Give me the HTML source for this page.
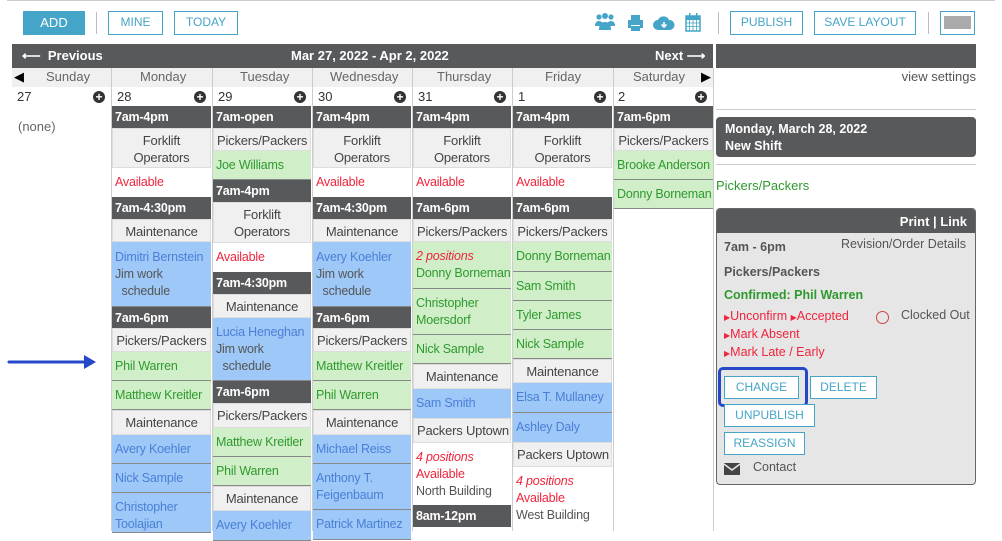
<!DOCTYPE html>
<html><head><meta charset="utf-8">
<style>
*{margin:0;padding:0;box-sizing:border-box}
body{width:1002px;height:531px;overflow:hidden;background:#fff;font-family:"Liberation Sans",sans-serif;font-size:12.5px;color:#555;position:relative}
.a{position:absolute}
.btn{position:absolute;border:1.5px solid #45a5c8;color:#45a5c8;font-size:12px;text-align:center;background:#fff}
.col{position:absolute;top:106px}
.c>div{position:absolute;left:0;right:0;padding:0 3px;overflow:hidden;white-space:nowrap;line-height:17px;letter-spacing:-0.2px}
.d{background:#58595b;color:#fff;font-weight:bold;padding-top:3px!important}
.g{background:#f0f0f0;text-align:center;padding-top:3px!important;border:1px solid #ddd;color:#444;font-size:13px}
.gr{background:#d0eec8;color:#2e9a2e;border-bottom:1px solid #888;padding-top:6px!important}
.bl{background:#9ec8f8;color:#4a7fd6;border-bottom:1px solid #888;padding-top:6px!important}
.w{background:#fff;color:#f0243c;padding-top:6px!important}
.i{font-style:italic;color:#f0243c}
.k{color:#555}
.sep{position:absolute;top:68px;width:1px;height:463px;background:#ccc}
.plus{position:absolute;top:91px;width:12px;height:12px;border-radius:50%;background:#333;color:#fff;font-size:12px;line-height:12px;text-align:center;font-weight:bold}
</style></head><body>
<div class="a" style="left:7px;top:0;width:988px;height:1px;background:#ccc"></div>
<div class="a" style="left:23px;top:11px;width:62px;height:24px;background:#45a5c8;color:#fff;font-size:13px;text-align:center;line-height:24px">ADD</div>
<div class="a" style="left:96px;top:12px;width:1px;height:22px;background:#bbb"></div>
<div class="btn" style="left:108px;top:11px;width:55px;height:24px;line-height:21px">MINE</div>
<div class="btn" style="left:174px;top:11px;width:64px;height:24px;line-height:21px">TODAY</div>
<svg class="a" style="left:594px;top:12px" width="118" height="22" viewBox="0 0 118 22">
<g fill="#45a5c8">
<circle cx="5" cy="5" r="2.6"/><circle cx="17" cy="5" r="2.6"/><circle cx="11" cy="4" r="3"/>
<path d="M1 14q0-5 4-5t4 5z M13 14q0-5 4-5t4 5z M5 18q0-8 6-8t6 8z"/>
<path d="M37 3h9v5h-9z M34 8h15v8h-3v-3h-9v3h-3z M37 14h9v5h-9z" />
<path d="M64 18a5 5 0 0 1 0-10a6 6 0 0 1 11 0a5 5 0 0 1 1 10z"/>
<rect x="92" y="4" width="14" height="15" fill="none" stroke="#45a5c8" stroke-width="1.5"/>
<rect x="92" y="4" width="14" height="4"/>
<rect x="95" y="1" width="1.5" height="4"/><rect x="102" y="1" width="1.5" height="4"/>
<path d="M92 11h14M92 14.5h14M95.5 8v11M99 8v11M102.5 8v11" stroke="#45a5c8" stroke-width="0.8"/>
</g>
<path d="M70 10v5m-2.5-2.5l2.5 2.5l2.5-2.5" stroke="#fff" stroke-width="1.6" fill="none"/>
</svg>
<div class="a" style="left:718px;top:12px;width:1px;height:22px;background:#bbb"></div>
<div class="btn" style="left:730px;top:11px;width:73px;height:24px;line-height:21px">PUBLISH</div>
<div class="btn" style="left:814px;top:11px;width:102px;height:24px;line-height:21px">SAVE LAYOUT</div>
<div class="a" style="left:928px;top:12px;width:1px;height:22px;background:#bbb"></div>
<div class="btn" style="left:940px;top:11px;width:35px;height:24px"><div style="margin:4px auto;width:27px;height:13px;background:#aaa"></div></div>

<div class="a" style="left:12px;top:44px;width:701px;height:24px;background:#58595b;color:#fff;font-weight:bold;font-size:13px;line-height:24px">
<span class="a" style="left:10px">⟵&nbsp; Previous</span>
<span class="a" style="left:279px">Mar 27, 2022 - Apr 2, 2022</span>
<span class="a" style="left:643px">Next ⟶</span></div>
<div class="a" style="left:716px;top:44px;width:260px;height:24px;background:#58595b"></div>
<div class="a" style="left:12px;top:68px;width:701px;height:19px;background:#f0f0f0;font-size:13px;color:#666;line-height:17px">
<span class="a" style="left:2px;color:#000">◀</span>
<span class="a" style="left:34px">Sunday</span><span class="a" style="left:128px">Monday</span><span class="a" style="left:228px">Tuesday</span><span class="a" style="left:318px">Wednesday</span><span class="a" style="left:425px">Thursday</span><span class="a" style="left:533px">Friday</span><span class="a" style="left:621px">Saturday</span>
<span class="a" style="left:689px;color:#000">▶</span></div>
<div class="sep" style="left:111px"></div><div class="sep" style="left:212px"></div><div class="sep" style="left:312px"></div><div class="sep" style="left:412px"></div><div class="sep" style="left:512px"></div><div class="sep" style="left:613px"></div><div class="sep" style="left:713px"></div>
<div class="a" style="top:89px;font-size:13px;color:#333;left:17px">27</div>
<div class="a" style="top:89px;font-size:13px;color:#333;left:117px">28</div>
<div class="a" style="top:89px;font-size:13px;color:#333;left:218px">29</div>
<div class="a" style="top:89px;font-size:13px;color:#333;left:318px">30</div>
<div class="a" style="top:89px;font-size:13px;color:#333;left:418px">31</div>
<div class="a" style="top:89px;font-size:13px;color:#333;left:518px">1</div>
<div class="a" style="top:89px;font-size:13px;color:#333;left:618px">2</div>
<div class="plus" style="left:93px">+</div><div class="plus" style="left:194px">+</div><div class="plus" style="left:294px">+</div><div class="plus" style="left:394px">+</div><div class="plus" style="left:494px">+</div><div class="plus" style="left:594px">+</div><div class="plus" style="left:695px">+</div>
<div class="a" style="left:18px;top:119px;font-size:13px;color:#666">(none)</div>

<div class="c col" style="left:112px;width:99px">
<div class="d" style="top:0;height:22px">7am-4pm</div>
<div class="g" style="top:22px;height:40px;white-space:normal">Forklift Operators</div>
<div class="w" style="top:62px;height:29px">Available</div>
<div class="d" style="top:91px;height:22px">7am-4:30pm</div>
<div class="g" style="top:113px;height:23px">Maintenance</div>
<div class="bl" style="top:136px;height:65px;padding-top:7px!important">Dimitri Bernstein<br><span class="k">Jim work<br>&nbsp; schedule</span></div>
<div class="d" style="top:201px;height:21px">7am-6pm</div>
<div class="g" style="top:222px;height:24px">Pickers/Packers</div>
<div class="gr" style="top:246px;height:29px">Phil Warren</div>
<div class="gr" style="top:275px;height:29px">Matthew Kreitler</div>
<div class="g" style="top:304px;height:25px">Maintenance</div>
<div class="bl" style="top:329px;height:29px">Avery Koehler</div>
<div class="bl" style="top:358px;height:29px">Nick Sample</div>
<div class="bl" style="top:387px;height:40px;padding-top:6px!important">Christopher<br>Toolajian</div>
</div>
<div class="c col" style="left:213px;width:98px">
<div class="d" style="top:0;height:22px">7am-open</div>
<div class="g" style="top:22px;height:23px">Pickers/Packers</div>
<div class="gr" style="top:45px;height:29px">Joe Williams</div>
<div class="d" style="top:74px;height:22px">7am-4pm</div>
<div class="g" style="top:96px;height:41px;white-space:normal">Forklift Operators</div>
<div class="w" style="top:137px;height:29px">Available</div>
<div class="d" style="top:166px;height:22px">7am-4:30pm</div>
<div class="g" style="top:188px;height:24px">Maintenance</div>
<div class="bl" style="top:212px;height:63px">Lucia Heneghan<br><span class="k">Jim work<br>&nbsp; schedule</span></div>
<div class="d" style="top:275px;height:22px">7am-6pm</div>
<div class="g" style="top:297px;height:25px">Pickers/Packers</div>
<div class="gr" style="top:322px;height:29px">Matthew Kreitler</div>
<div class="gr" style="top:351px;height:29px">Phil Warren</div>
<div class="g" style="top:380px;height:25px">Maintenance</div>
<div class="bl" style="top:405px;height:30px">Avery Koehler</div>
</div>
<div class="c col" style="left:313px;width:98px">
<div class="d" style="top:0;height:22px">7am-4pm</div>
<div class="g" style="top:22px;height:40px;white-space:normal">Forklift Operators</div>
<div class="w" style="top:62px;height:29px">Available</div>
<div class="d" style="top:91px;height:22px">7am-4:30pm</div>
<div class="g" style="top:113px;height:23px">Maintenance</div>
<div class="bl" style="top:136px;height:65px;padding-top:7px!important">Avery Koehler<br><span class="k">Jim work<br>&nbsp; schedule</span></div>
<div class="d" style="top:201px;height:21px">7am-6pm</div>
<div class="g" style="top:222px;height:24px">Pickers/Packers</div>
<div class="gr" style="top:246px;height:29px">Matthew Kreitler</div>
<div class="gr" style="top:275px;height:29px">Phil Warren</div>
<div class="g" style="top:304px;height:25px">Maintenance</div>
<div class="bl" style="top:329px;height:29px">Michael Reiss</div>
<div class="bl" style="top:358px;height:46px">Anthony T.<br>Feigenbaum</div>
<div class="bl" style="top:404px;height:30px">Patrick Martinez</div>
</div>
<div class="c col" style="left:413px;width:98px">
<div class="d" style="top:0;height:22px">7am-4pm</div>
<div class="g" style="top:22px;height:40px;white-space:normal">Forklift Operators</div>
<div class="w" style="top:62px;height:29px">Available</div>
<div class="d" style="top:91px;height:22px">7am-6pm</div>
<div class="g" style="top:113px;height:23px">Pickers/Packers</div>
<div class="gr" style="top:136px;height:47px"><span class="i">2 positions</span><br>Donny Borneman</div>
<div class="gr" style="top:183px;height:46px">Christopher<br>Moersdorf</div>
<div class="gr" style="top:229px;height:29px">Nick Sample</div>
<div class="g" style="top:258px;height:25px">Maintenance</div>
<div class="bl" style="top:283px;height:29px;border-bottom:none">Sam Smith</div>
<div class="g" style="top:312px;height:25px">Packers Uptown</div>
<div class="w" style="top:337px;height:62px"><span class="i">4 positions</span><br>Available<br><span class="k">North Building</span></div>
<div class="d" style="top:399px;height:22px">8am-12pm</div>
</div>
<div class="c col" style="left:513px;width:99px">
<div class="d" style="top:0;height:22px">7am-4pm</div>
<div class="g" style="top:22px;height:40px;white-space:normal">Forklift Operators</div>
<div class="w" style="top:62px;height:29px">Available</div>
<div class="d" style="top:91px;height:22px">7am-6pm</div>
<div class="g" style="top:113px;height:23px">Pickers/Packers</div>
<div class="gr" style="top:136px;height:30px">Donny Borneman</div>
<div class="gr" style="top:166px;height:29px">Sam Smith</div>
<div class="gr" style="top:195px;height:29px">Tyler James</div>
<div class="gr" style="top:224px;height:29px">Nick Sample</div>
<div class="g" style="top:253px;height:24px">Maintenance</div>
<div class="bl" style="top:277px;height:30px">Elsa T. Mullaney</div>
<div class="bl" style="top:307px;height:29px;border-bottom:none">Ashley Daly</div>
<div class="g" style="top:336px;height:25px">Packers Uptown</div>
<div class="w" style="top:361px;height:64px"><span class="i">4 positions</span><br>Available<br><span class="k">West Building</span></div>
</div>
<div class="c col" style="left:614px;width:99px">
<div class="d" style="top:0;height:22px">7am-6pm</div>
<div class="g" style="top:22px;height:23px">Pickers/Packers</div>
<div class="gr" style="top:45px;height:29px">Brooke Anderson</div>
<div class="gr" style="top:74px;height:29px">Donny Borneman</div>
</div>

<div class="a" style="left:800px;top:69px;width:176px;text-align:right;font-size:13px;color:#555">view settings</div>
<div class="a" style="left:716px;top:109px;width:260px;height:1px;background:#ccc"></div>
<div class="a" style="left:716px;top:117px;width:260px;height:40px;background:#58595b;border-radius:4px;color:#fff;font-weight:bold;font-size:12.5px;line-height:17px;padding:4px 9px">Monday, March 28, 2022<br>New Shift</div>
<div class="a" style="left:716px;top:164px;width:260px;height:1px;background:#ccc"></div>
<div class="a" style="left:716px;top:178px;font-size:13px;color:#2e9a2e">Pickers/Packers</div>
<div class="a" style="left:716px;top:208px;width:260px;height:277px;background:#e6e6e6;border:1px solid #666;border-radius:4px;overflow:hidden">
<div style="height:24px;background:#58595b;color:#fff;font-weight:bold;text-align:right;padding:5px 8px 0 0;font-size:13px">Print | Link</div>
<div class="a" style="left:7px;top:31px;font-weight:bold;color:#555">7am - 6pm</div>
<div class="a" style="right:9px;top:28px;color:#555">Revision/Order Details</div>
<div class="a" style="left:7px;top:56px;font-weight:bold;color:#555">Pickers/Packers</div>
<div class="a" style="left:7px;top:79px;font-weight:bold;color:#2e9a2e">Confirmed: Phil Warren</div>
<div class="a" style="left:7px;top:99px;color:#f0243c;line-height:17px"><span style="font-size:8px">▶</span>Unconfirm <span style="font-size:8px">▶</span>Accepted<br><span style="font-size:8px">▶</span>Mark Absent<br><span style="font-size:8px">▶</span>Mark Late / Early</div>
<div class="a" style="left:159px;top:102px;width:13px;height:13px;border:1px solid #c44;border-radius:50%"></div>
<div class="a" style="left:184px;top:99px;color:#555">Clocked Out</div>
<div class="a" style="left:1px;top:158px;width:90px;height:40px;border:3px solid #2448c8;border-radius:5px"></div>
<div class="btn" style="left:7px;top:167px;width:75px;height:23px;line-height:20px">CHANGE</div>
<div class="btn" style="left:93px;top:167px;width:67px;height:23px;line-height:20px">DELETE</div>
<div class="btn" style="left:7px;top:195px;width:91px;height:23px;line-height:20px">UNPUBLISH</div>
<div class="btn" style="left:7px;top:223px;width:81px;height:23px;line-height:20px">REASSIGN</div>
<svg class="a" style="left:7px;top:254px" width="16" height="12"><rect width="16" height="12" fill="#444"/><path d="M0 1l8 6l8-6" stroke="#e6e6e6" stroke-width="1.5" fill="none"/></svg>
<div class="a" style="left:36px;top:251px;color:#555">Contact</div>
</div>

<svg class="a" style="left:6px;top:354px" width="90" height="16"><path d="M3 8H78" stroke="#2448c8" stroke-width="3" stroke-linecap="round"/><path d="M78 1L90 8L78 15z" fill="#2448c8"/></svg>
</body></html>
